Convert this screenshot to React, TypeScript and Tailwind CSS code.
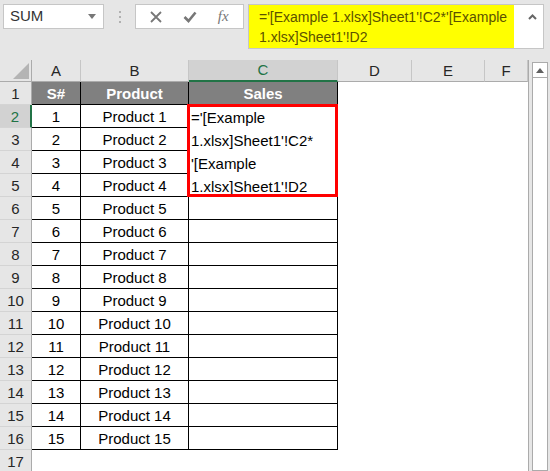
import React from 'react';

const font = "font-['Liberation_Sans',Arial,sans-serif]";

const colHeads = ['A', 'B', 'C', 'D', 'E', 'F'];

function ColHead({ label, active }: { label: string; active?: boolean }) {
  return (
    <div
      className={`flex items-center justify-center border-r border-r-[#c6c6c6] text-[15px] pt-[1px] ${
        active
          ? 'bg-[#d2d2d2] text-[#217346] border-b-2 border-b-[#217346]'
          : 'bg-[#e6e6e6] text-[#262626] border-b border-b-[#ababab]'
      }`}
    >
      {label}
    </div>
  );
}

function RowHead({ n, active }: { n: number; active?: boolean }) {
  return (
    <div
      className={`flex items-center justify-center text-[15px] pt-[2px] border-b border-b-[#d4d4d4] ${
        active
          ? 'bg-[#d2d2d2] text-[#217346] border-r-2 border-r-[#217346]'
          : 'bg-[#e6e6e6] text-[#262626] border-r border-r-[#ababab]'
      }`}
    >
      {n}
    </div>
  );
}

function Cell({ children, head }: { children?: React.ReactNode; head?: boolean }) {
  return (
    <div
      className={`flex items-center justify-center text-[15px] pt-[2px] border-r border-b border-black ${
        head ? 'bg-[#808080] text-white font-bold' : 'bg-white text-black'
      }`}
    >
      {children}
    </div>
  );
}

const Blank = () => <div className="bg-white" />;

export default function App() {
  const rows: React.ReactNode[] = [];

  // column header row
  rows.push(
    <div key="corner" className="relative bg-[#e6e6e6] border-r border-r-[#ababab] border-b border-b-[#ababab]">
      <svg className="absolute left-[13px] top-[3px]" width="16" height="16" viewBox="0 0 16 16">
        <polygon points="16,0 16,16 0,16" fill="#b4b4b4" />
      </svg>
    </div>
  );
  colHeads.forEach((c) => rows.push(<ColHead key={'h' + c} label={c} active={c === 'C'} />));

  // row 1: table header
  rows.push(<RowHead key="r1" n={1} />);
  rows.push(<Cell key="r1a" head>S#</Cell>);
  rows.push(<Cell key="r1b" head>Product</Cell>);
  rows.push(<Cell key="r1c" head>Sales</Cell>);
  rows.push(<Blank key="r1d" />, <Blank key="r1e" />, <Blank key="r1f" />);

  for (let r = 2; r <= 16; r++) {
    rows.push(<RowHead key={'r' + r} n={r} active={r === 2} />);
    rows.push(<Cell key={'a' + r}>{r - 1}</Cell>);
    rows.push(<Cell key={'b' + r}>Product {r - 1}</Cell>);
    if (r === 2) {
      rows.push(
        <div key="merged" className="relative row-span-4 bg-white border-r border-b border-black text-[15px] text-black pl-[2px]">
          {["='[Example", "1.xlsx]Sheet1'!C2*", "'[Example", "1.xlsx]Sheet1'!D2"].map((t) => (
            <div key={t} className="h-[23px] leading-[23px] pt-[1px] whitespace-nowrap">
              {t}
            </div>
          ))}
          <div className="absolute -left-[2px] -top-px -bottom-px -right-px border-[3px] border-[#ff0000]" />
        </div>
      );
    } else if (r > 5) {
      rows.push(<Cell key={'c' + r} />);
    }
    rows.push(<Blank key={'d' + r} />, <Blank key={'e' + r} />, <Blank key={'f' + r} />);
  }

  rows.push(<RowHead key="r17" n={17} />);
  for (let i = 0; i < 6; i++) rows.push(<Blank key={'z' + i} />);

  return (
    <div className={`w-[550px] h-[471px] overflow-hidden bg-[#e6e6e6] flex flex-col ${font}`}>
      {/* formula bar */}
      <div className="flex items-start pl-[3px] pt-[4px] h-[60px] shrink-0">
        <div className="w-[101px] h-[25px] bg-white border border-[#c6c6c6] flex items-center justify-between pl-[6px] pr-[7px]">
          <span className="text-[15px] text-[#333333]">SUM</span>
          <svg width="8" height="5" viewBox="0 0 8 5">
            <polygon points="0,0 8,0 4,5" fill="#777777" />
          </svg>
        </div>
        <div className="w-[31px] h-[25px] flex flex-col items-center justify-center gap-[3px]">
          <span className="w-[2px] h-[2px] bg-[#b0b0b0]" />
          <span className="w-[2px] h-[2px] bg-[#b0b0b0]" />
          <span className="w-[2px] h-[2px] bg-[#b0b0b0]" />
        </div>
        <div className="w-[109px] h-[25px] bg-white border border-[#c6c6c6] flex items-center justify-around px-[4px]">
          <svg width="12" height="12" viewBox="0 0 12 12">
            <path d="M1 1 L11 11 M11 1 L1 11" stroke="#777777" strokeWidth="1.8" />
          </svg>
          <svg width="14" height="12" viewBox="0 0 14 12">
            <path d="M1.5 6 L5.5 10 L12.5 1.5" stroke="#777777" strokeWidth="2.6" fill="none" />
          </svg>
          <span className="font-['Liberation_Serif',serif] italic text-[15px] text-[#777777] leading-none">fx</span>
        </div>
        <div className="ml-[4px] w-[296px] h-[45px] bg-white border border-[#c6c6c6] flex">
          <div className="w-[265px] h-full bg-[#ffff00] pl-[10px] pt-[2px] text-[14px] leading-[20px] text-[#5c5200] whitespace-nowrap">
            <div>='[Example 1.xlsx]Sheet1'!C2*'[Example</div>
            <div>1.xlsx]Sheet1'!D2</div>
          </div>
          <div className="flex-1 flex justify-end pr-[6px] pt-[9px]">
            <svg width="9" height="6" viewBox="0 0 9 6">
              <path d="M1 5 L4.5 1.5 L8 5" stroke="#666666" strokeWidth="2" fill="none" />
            </svg>
          </div>
        </div>
      </div>

      {/* sheet */}
      <div className="flex flex-1 min-h-0">
        <div className="w-[528px] grid grid-cols-[32px_49px_108px_149px_74px_73px_43px] grid-rows-[22px_repeat(17,23px)] bg-white">
          {rows}
        </div>
        <div className="w-[22px] border-l border-l-[#ababab] bg-[#e6e6e6] pl-[3px] pt-[2px]">
          <div className="w-[16px] h-full bg-white border border-[#ababab] flex flex-col">
            <div className="h-[15px] border-b border-b-[#ababab] flex items-center justify-center">
              <svg width="8" height="5" viewBox="0 0 8 5">
                <polygon points="0,5 8,5 4,0" fill="#606060" />
              </svg>
            </div>
          </div>
        </div>
      </div>
    </div>
  );
}
